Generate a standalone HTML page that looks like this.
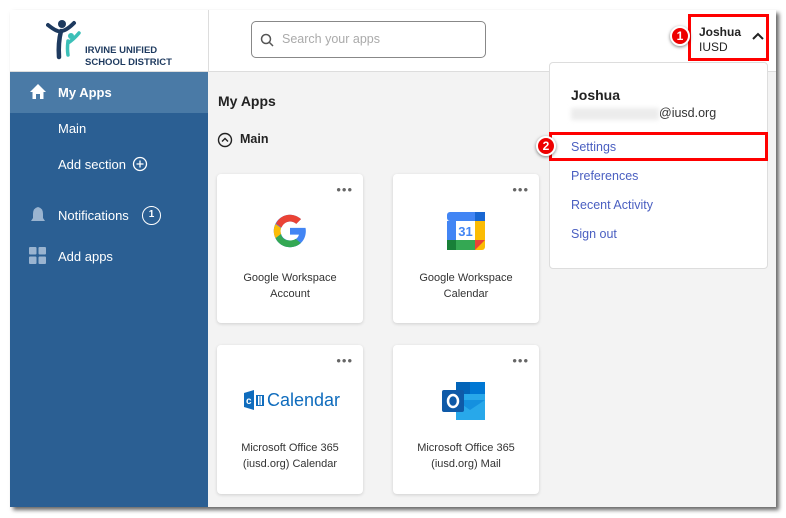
<!DOCTYPE html>
<html><head><meta charset="utf-8"><style>
*{box-sizing:border-box;margin:0;padding:0}
body{width:786px;height:518px;background:#fff;font-family:"Liberation Sans",sans-serif;position:relative;overflow:hidden}
.frame{position:absolute;left:10px;top:10px;width:766px;height:497px;background:#f3f3f3;overflow:hidden;box-shadow:3px 3px 4px rgba(0,0,0,.6)}
.abs{position:absolute}
.side{left:0;top:62px;width:198px;height:435px;background:#2b5f93}
.logoarea{left:0;top:0;width:198px;height:62px;background:#fff;border-bottom:1px solid #ddd}
.hdr{left:198px;top:0;width:568px;height:62px;background:#fff;border-bottom:1px solid #ddd;border-left:1px solid #ddd}
.nav{color:#fff;font-size:13px;position:absolute}
.card{position:absolute;background:#fff;border-radius:4px;box-shadow:0 1px 3px rgba(0,0,0,.15);width:146px;height:149px}
.card .dots{position:absolute;right:10px;top:8px;color:#666;font-size:13px;letter-spacing:1px}
.card .t{position:absolute;left:0;right:0;top:96px;text-align:center;font-size:11px;color:#333;line-height:16px}
.menu{left:539px;top:52px;width:219px;height:207px;background:#fff;border:1px solid #ddd;border-radius:4px}
.mi{position:absolute;left:21px;color:#4a5fc1;font-size:12.5px}
.red{position:absolute;border:3px solid #f00}
.badge{position:absolute;width:20px;height:20px;border-radius:50%;background:#e00;color:#fff;font-size:12px;font-weight:bold;text-align:center;line-height:17px;border:2px solid #fff;box-shadow:0 1px 3px rgba(0,0,0,.5)}
</style></head><body>
<div class="frame">
<div class="abs logoarea">
<svg class="abs" style="left:36px;top:9px" width="40" height="42" viewBox="0 0 40 42">
<circle cx="16" cy="5" r="4" fill="#1e3a5f"/>
<path d="M2 6 Q12 14 15 12 Q20 12 28 4" stroke="#1e3a5f" stroke-width="4" fill="none" stroke-linecap="round"/>
<path d="M15 12 Q12 24 13 38" stroke="#1e3a5f" stroke-width="4.5" fill="none" stroke-linecap="round"/>
<circle cx="25" cy="17" r="3" fill="#3cc0b8"/>
<path d="M22 22 Q21 30 22 36 M22 24 Q28 20 33 14" stroke="#3cc0b8" stroke-width="3.5" fill="none" stroke-linecap="round"/>
</svg>
<div class="abs" style="left:75px;top:35px;font-size:9.5px;font-weight:bold;color:#1e3a5f;line-height:12px">IRVINE UNIFIED<br>SCHOOL DISTRICT</div>
</div>
<div class="abs hdr">
<div class="abs" style="left:42px;top:11px;width:235px;height:37px;border:1px solid #888;border-radius:5px">
<svg class="abs" style="left:8px;top:11px" width="14" height="14" viewBox="0 0 14 14"><circle cx="6" cy="6" r="4.5" stroke="#555" stroke-width="1.5" fill="none"/><path d="M9.5 9.5 L13 13" stroke="#555" stroke-width="1.5"/></svg>
<div class="abs" style="left:30px;top:10px;font-size:12.5px;color:#aaa">Search your apps</div></div>
<div class="abs" style="left:490px;top:15px;font-size:12px;color:#222;font-weight:bold">Joshua</div>
<div class="abs" style="left:490px;top:30px;font-size:12px;color:#222">IUSD</div>
<svg class="abs" style="left:543px;top:22px" width="12" height="8"><path d="M1 7 L6 2 L11 7" stroke="#222" stroke-width="2" fill="none"/></svg>
</div>
<div class="abs side">
<div class="abs" style="left:0;top:0;width:198px;height:41px;background:#4a7aa6"></div>
<svg class="abs" style="left:19px;top:11px" width="18" height="17"><path d="M9 1 L1 9 H3.5 V16 H7 V11 H11 V16 H14.5 V9 H17 Z" fill="#fff"/></svg>
<div class="nav" style="left:48px;top:13px;font-weight:bold">My Apps</div>
<div class="nav" style="left:48px;top:49px">Main</div>
<div class="nav" style="left:48px;top:85px">Add section</div>
<svg class="abs" style="left:122px;top:84px" width="16" height="16"><circle cx="8" cy="8" r="6.5" stroke="#fff" stroke-width="1.3" fill="none"/><path d="M8 4.5V11.5M4.5 8H11.5" stroke="#fff" stroke-width="1.3"/></svg>
<svg class="abs" style="left:19px;top:134px" width="18" height="18"><path d="M9 1 Q4 2 4 8 V12 L2 15 H16 L14 12 V8 Q14 2 9 1Z" fill="#9ab4d0"/></svg>
<div class="nav" style="left:48px;top:136px">Notifications</div>
<div class="abs" style="left:132px;top:134px;width:19px;height:19px;border:1.5px solid #fff;border-radius:50%;color:#fff;font-size:10px;font-weight:bold;text-align:center;line-height:16px">1</div>
<svg class="abs" style="left:19px;top:175px" width="18" height="18" fill="#9ab4d0"><rect x="0" y="0" width="7.5" height="7.5" rx="1"/><rect x="9.5" y="0" width="7.5" height="7.5" rx="1"/><rect x="0" y="9.5" width="7.5" height="7.5" rx="1"/><rect x="9.5" y="9.5" width="7.5" height="7.5" rx="1"/></svg>
<div class="nav" style="left:48px;top:177px">Add apps</div>
</div>
<div class="abs" style="left:208px;top:83px;font-size:14px;font-weight:bold;color:#222">My Apps</div>
<svg class="abs" style="left:207px;top:122px" width="16" height="16"><circle cx="8" cy="8" r="6.5" stroke="#222" stroke-width="1.4" fill="none"/><path d="M5 9.5 L8 6.5 L11 9.5" stroke="#222" stroke-width="1.4" fill="none"/></svg>
<div class="abs" style="left:230px;top:122px;font-size:12.5px;color:#222;font-weight:bold">Main</div>

<div class="card" style="left:207px;top:164px"><div class="dots">•••</div>
<svg class="abs" style="left:54px;top:38px" width="38" height="38" viewBox="0 0 48 48"><path d="M43.6 20H24v8.5h11.3C34.3 33 30 36 24 36c-6.6 0-12-5.4-12-12s5.4-12 12-12c3 0 5.8 1.1 7.9 3l6-6C34.3 5.7 29.4 3.5 24 3.5 12.7 3.5 3.5 12.7 3.5 24S12.7 44.5 24 44.5 44 36 44 24c0-1.3-.1-2.700-.4-4z" fill="#4285f4"/><path d="M6.3 14.7l7 5.1C15.1 15.2 19.2 12 24 12c3 0 5.8 1.1 7.9 3l6-6C34.3 5.7 29.4 3.5 24 3.5c-7.9 0-14.7 4.5-17.7 11.2z" fill="#ea4335"/><path d="M24 44.5c5.3 0 10.1-2 13.7-5.3l-6.5-5.3C29.2 35.3 26.7 36 24 36c-5.9 0-10.4-3-11.3-8.4l-7 5.4C8.9 39.9 15.9 44.5 24 44.5z" fill="#34a853"/><path d="M12.7 27.6C12.3 26.5 12 25.3 12 24s.3-2.6.7-3.8l-7-5.1C4.3 17.8 3.5 20.8 3.5 24s.8 6.3 2.2 9z" fill="#fbbc05"/></svg>
<div class="t">Google Workspace<br>Account</div></div>

<div class="card" style="left:383px;top:164px"><div class="dots">•••</div>
<svg class="abs" style="left:54px;top:38px" width="38" height="38" viewBox="0 0 38 38"><rect x="0" y="0" width="38" height="38" rx="3" fill="#fbbc04"/><rect x="0" y="0" width="28" height="28" fill="#fff"/><rect x="0" y="0" width="38" height="9" rx="3" fill="#4285f4"/><rect x="28" y="0" width="10" height="9" fill="#1967d2"/><rect x="0" y="28" width="28" height="10" fill="#34a853"/><rect x="0" y="28" width="9" height="10" fill="#188038"/><path d="M28 28 H38 L28 38Z" fill="#ea4335"/><rect x="0" y="9" width="9" height="19" fill="#4285f4"/><text x="18.5" y="24" font-size="13" font-weight="bold" fill="#4285f4" text-anchor="middle" font-family="Liberation Sans">31</text></svg>
<div class="t">Google Workspace<br>Calendar</div></div>

<div class="card" style="left:207px;top:335px"><div class="dots">•••</div>
<svg class="abs" style="left:27px;top:45px" width="13" height="20"><path d="M0 3 L10 0 V20 L0 17Z" fill="#0f6cbd"/><text x="2" y="14" font-size="10" font-weight="bold" fill="#fff" font-family="Liberation Sans">c</text></svg>
<div class="abs" style="left:39px;top:50px;width:8px;height:11px;border:1px solid #0f6cbd;background:repeating-linear-gradient(90deg,#0f6cbd 0 1px,#fff 1px 2.5px)"></div>
<div class="abs" style="left:50px;top:45px;font-size:18px;color:#0f6cbd">Calendar</div>
<div class="t" style="top:95px">Microsoft Office 365<br>(iusd.org) Calendar</div></div>

<div class="card" style="left:383px;top:335px"><div class="dots">•••</div>
<svg class="abs" style="left:49px;top:37px" width="43" height="38" viewBox="0 0 43 38"><rect x="14" y="0" width="29" height="24" fill="#28a8ea"/><rect x="14" y="0" width="14" height="12" fill="#0364b8"/><rect x="28" y="0" width="15" height="12" fill="#0078d4"/><path d="M14 18 L43 18 V38 H14Z" fill="#1490df"/><path d="M14 18 L28 28 L43 18 V38 H14Z" fill="#28a8ea"/><rect x="0" y="8" width="22" height="22" rx="2" fill="#0f5aa8"/><ellipse cx="11" cy="19" rx="5" ry="6" stroke="#fff" stroke-width="2.5" fill="none"/></svg>
<div class="t" style="top:95px">Microsoft Office 365<br>(iusd.org) Mail</div></div>

<div class="abs menu">
<div class="abs" style="left:21px;top:24px;font-size:14px;font-weight:bold;color:#222">Joshua</div>
<div class="abs" style="left:21px;top:45px;width:88px;height:12px;background:#ececec;filter:blur(2px)"></div>
<div class="abs" style="left:109px;top:43px;font-size:12.5px;color:#333">@iusd.org</div>
<div class="mi" style="top:77px">Settings</div>
<div class="mi" style="top:106px">Preferences</div>
<div class="mi" style="top:135px">Recent Activity</div>
<div class="mi" style="top:164px">Sign out</div>
</div>
</div>
<div class="red" style="left:688px;top:14px;width:81px;height:47px"></div>
<div class="red" style="left:549px;top:132px;width:219px;height:29px"></div>
<div class="badge" style="left:670px;top:26px">1</div>
<div class="badge" style="left:536px;top:136px">2</div>
</body></html>
